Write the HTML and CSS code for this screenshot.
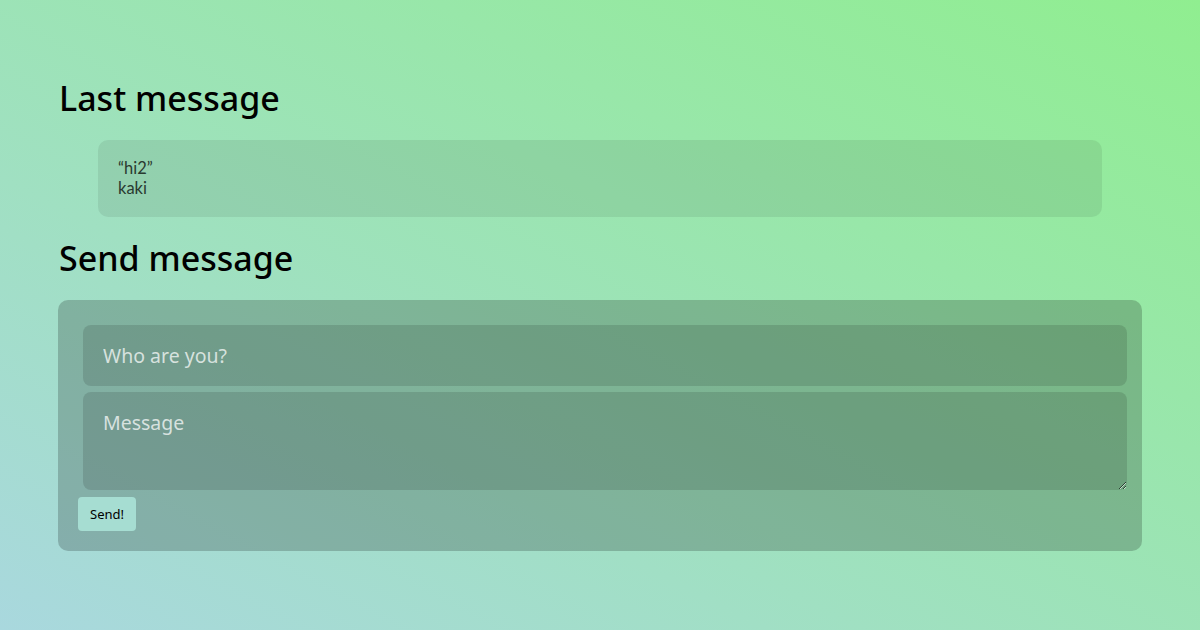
FILE: index.html
```html
<!DOCTYPE html>
<html lang="en">
<head>
<meta charset="utf-8">
<title>Messages</title>
<link rel="stylesheet" href="styles.css">
</head>
<body>
<main class="page">
  <h2 class="title title-last">Last message</h2>
  <blockquote class="last">
    <div class="last-text">“hi2”</div>
    <div class="last-author">kaki</div>
  </blockquote>
  <h2 class="title title-send">Send message</h2>
  <form class="send" onsubmit="return false">
    <input class="field field-name" type="text" placeholder="Who are you?">
    <textarea class="field field-msg" placeholder="Message"></textarea>
    <button class="send-btn" type="submit">Send!</button>
  </form>
</main>
</body>
</html>
```

FILE: styles.css
```css
html, body {
  margin: 0;
  height: 100%;
}
body {
  background: linear-gradient(to top right, #a9d8de, #90ee90);
  font-family: "Noto Sans", "DejaVu Sans", sans-serif;
  color: #000;
}
.page {
  padding: 78px 58px 0 58px;
}
.title {
  margin: 0;
  font-size: 34px;
  font-weight: 500;
  line-height: 40px;
  padding-left: 1px;
}
.title-last {
  margin-bottom: 22px;
}
.title-send {
  margin-top: 21px;
  margin-bottom: 22px;
}
.last {
  margin: 0 40px;
  padding: 19px 20px;
  border-radius: 10px;
  background: rgba(0, 0, 0, 0.075);
  font-family: Lato, "Noto Sans", sans-serif;
  font-size: 16.5px;
  line-height: 19.5px;
  color: #2a3a30;
}
.send {
  display: flex;
  flex-direction: column;
  align-items: flex-start;
  padding: 20px;
  border-radius: 10px;
  background: rgba(0, 0, 0, 0.2);
}
.field {
  box-sizing: border-box;
  width: 100%;
  margin: 5px 0 0 5px;
  padding: 20px;
  border: none;
  border-radius: 8px;
  background: rgba(0, 0, 0, 0.12);
  font-family: inherit;
  font-size: 19.5px;
  line-height: 21px;
  color: #fff;
  outline: none;
}
.field::placeholder {
  color: rgba(255, 255, 255, 0.72);
}
.field-name {
  height: 61px;
}
.field-msg {
  height: 98px;
  margin-top: 6px;
  resize: vertical;
}
.send-btn {
  margin-top: 7px;
  height: 34px;
  padding: 0 12px;
  border: none;
  border-radius: 4px;
  background: #a6ddd2;
  font-family: inherit;
  font-size: 13px;
  color: #000;
}
```
